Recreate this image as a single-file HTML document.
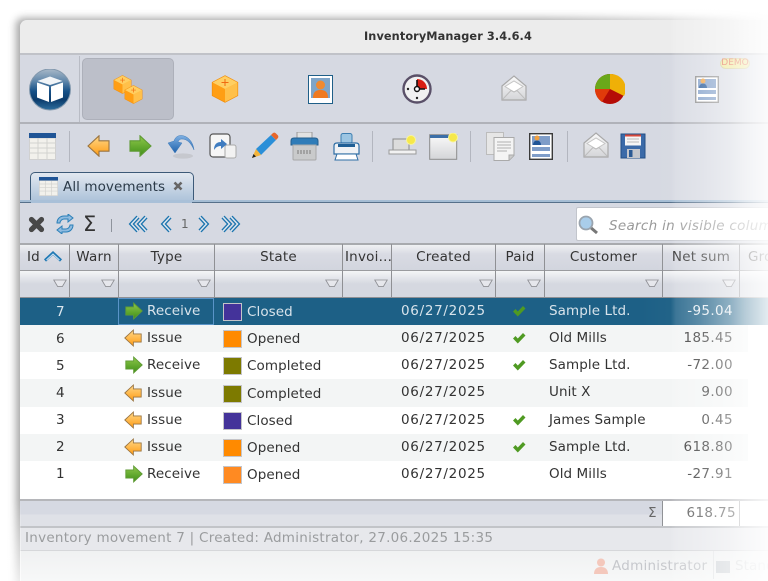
<!DOCTYPE html>
<html><head><meta charset="utf-8"><style>
html,body{margin:0;padding:0;background:#fff}
#p{position:relative;width:768px;height:581px;overflow:hidden;background:#fff;font-family:"DejaVu Sans",sans-serif;font-size:13.5px;color:#333;filter:blur(.35px)}
#p div,#p svg{position:absolute}
.t{white-space:nowrap;line-height:16px;letter-spacing:.08px;margin-top:1px}
.d{letter-spacing:.7px}
.n{letter-spacing:.38px;left:633px;width:100px;text-align:right}
.h{white-space:nowrap;line-height:16px;text-align:center;top:249px;color:#333;letter-spacing:.2px}
.vl{width:1px;background:#8f9094}
.sep{width:1px;background:#b3b6bf;top:131px;height:31px}
.sw{left:223px;width:17px;height:16px;border:1px solid #c4c4c8}
</style></head><body><div id="p">
<svg width="0" height="0" style="left:0;top:0">
<defs>
<linearGradient id="or" x1="0" y1="0" x2="0" y2="1"><stop offset="0" stop-color="#ffd98a"/><stop offset="1" stop-color="#ff9a12"/></linearGradient>
<linearGradient id="gr" x1="0" y1="0" x2="0" y2="1"><stop offset="0" stop-color="#8fc84a"/><stop offset="1" stop-color="#3f8f18"/></linearGradient>
<linearGradient id="bl" x1="0" y1="0" x2="0" y2="1"><stop offset="0" stop-color="#7fb0e2"/><stop offset="1" stop-color="#1f62ac"/></linearGradient>
<linearGradient id="lg" x1="0" y1="0" x2="0" y2="1"><stop offset="0" stop-color="#fafafa"/><stop offset="1" stop-color="#d4d5d8"/></linearGradient>
<symbol id="al" viewBox="0 0 23 22"><path d="M1 11 12 .8v5h10v10.400H12v5z" fill="url(#or)" stroke="#9a7440" stroke-width="1.100"/></symbol>
<symbol id="ar" viewBox="0 0 23 22"><path d="M22 11 11 .8v5H1v10.400h10v5z" fill="url(#gr)" stroke="#5f9a35" stroke-width="1.100"/></symbol>
<symbol id="tb" viewBox="0 0 27 27"><rect x=".5" y="5" width="26" height="21.5" fill="#f2f1ec" stroke="#d0d0d0"/><rect width="27" height="5" fill="#1f5496"/><path d="M9 5v22M18 5v22M0 10h27M0 15h27M0 20h27" stroke="#d2d2cf"/></symbol>
<symbol id="cube" viewBox="0 0 28 28"><path d="M14 1 26.500 7.500v13L14 27 1.500 20.500v-13z" fill="#ffb42e" stroke="#f28c0a" stroke-width="1.300"/><path d="M14 1 26.500 7.500 14 14 1.500 7.500z" fill="#ffcf62"/><path d="M1.500 7.500 14 14v13L1.500 20.500z" fill="#ff9e14"/><path d="M14 14 26.500 7.500v13L14 27z" fill="#ffc04a"/><path d="M14 4v7M10.500 7.500h7" stroke="#f06a10"/></symbol>
<symbol id="env" viewBox="0 0 26 26"><path d="M1 11 13 1l12 10v14H1z" fill="url(#lg)" stroke="#a9a9a9" stroke-width="1.200"/><path d="M4 11.500 13 6l9 5.500-9 5.500z" fill="#fff" stroke="#c5c5c5"/><path d="M1.500 24.500 10 15.500l3 1.500 3-1.500 8.500 9" fill="none" stroke="#bdbdbd"/></symbol>
<symbol id="con" viewBox="0 0 24 27"><rect x=".7" y=".7" width="22.600" height="25.600" fill="#fff" stroke="currentColor" stroke-width="1.400"/><rect x="3" y="3" width="18" height="9" fill="#7f9dc8"/><rect x="3" y="14" width="18" height="4" fill="#7f9dc8"/><rect x="3" y="21" width="18" height="3" fill="#7f9dc8"/><circle cx="8" cy="5" r="2.500" fill="#f0a040"/><path d="M4 12c0-3 2-4.500 4-4.500s4 1.500 4 4.500z" fill="#1f5496"/></symbol>
<symbol id="chk" viewBox="0 0 14 12"><path d="M1 6.500 3.500 4 5.800 6.500 11 1l2.500 2.500-7.700 8z" fill="#4f9a22"/></symbol>
<symbol id="fl" viewBox="0 0 18 11"><path d="M1 1h16L12 9.500H6z" fill="#e6e7ec" stroke="#8e8f94" stroke-width="1.100"/></symbol>
</defs></svg>

<!-- window -->
<div style="left:20px;top:20px;width:760px;height:575px;background:#d6d9e2;border-radius:7px 0 0 0;box-shadow:-4px -2px 8px rgba(60,60,60,.45)"></div>
<div style="left:20px;top:20px;width:748px;height:33px;background:#ececec;border-radius:7px 0 0 0"></div>
<div style="left:20px;top:53px;width:748px;height:2px;background:#c0c2c8"></div>
<div class="t" style="left:364px;top:28px;font-weight:bold;font-size:11.300px;color:#333;letter-spacing:.1px">InventoryManager 3.4.6.4</div>

<!-- main toolbar -->
<div style="left:79px;top:56px;width:1px;height:66px;background:#b9bcc5"></div>
<div style="left:20px;top:122px;width:748px;height:2px;background:#b0b2b9"></div>
<div style="left:82px;top:58px;width:90px;height:60px;background:#bcbfc9;border:1px solid #adb0ba;border-radius:5px"></div>
<svg style="left:29px;top:69px" width="42" height="42" viewBox="0 0 42 42"><defs><linearGradient id="lo" x1="0" y1="0" x2="0" y2="1"><stop offset="0" stop-color="#a8b8c8"/><stop offset=".3" stop-color="#5f86aa"/><stop offset=".55" stop-color="#154f86"/><stop offset=".75" stop-color="#0c3c6c"/><stop offset="1" stop-color="#2e6f9f"/></linearGradient></defs><circle cx="21" cy="20.500" r="20.500" fill="url(#lo)" stroke="#8298ad"/><path d="M21 7.500 33.500 12 21 16 8.500 12z" fill="#f2f5f8"/><path d="M8 13.500 20 17.500v15.500L8 28.500z" fill="#fff"/><path d="M34 13.500 22 17.500v15.500L34 28.500z" fill="#fff"/></svg>
<svg style="left:113px;top:75px" width="19" height="19"><use href="#cube" width="19" height="19"/></svg>
<svg style="left:124px;top:85px" width="19" height="19"><use href="#cube" width="19" height="19"/></svg>
<svg style="left:211px;top:75px" width="28" height="28"><use href="#cube" width="28" height="28"/></svg>
<svg style="left:308px;top:75px" width="25" height="29" viewBox="0 0 25 29"><rect x=".5" y=".5" width="24" height="28" fill="#fff" stroke="#1f5f88"/><rect x="3" y="3" width="19" height="20" fill="#7fa5c8"/><circle cx="12.500" cy="10" r="4.500" fill="#f08a30"/><path d="M5 23c0-7 4-8 7.500-8s7.500 1 7.500 8z" fill="#f07a20"/></svg>
<svg style="left:402px;top:74px" width="30" height="30" viewBox="0 0 30 30"><circle cx="15" cy="15" r="13.500" fill="#f1f1f1" stroke="#5a5068" stroke-width="2.400"/><path d="M15 15V5a10 10 0 0 1 10 10z" fill="#d81e12"/><path d="M15 6v9h8" fill="none" stroke="#111" stroke-width="1.600"/><circle cx="15" cy="15" r="2.500" fill="#fff" stroke="#111" stroke-width="1.400"/><circle cx="6" cy="15" r="1.200" fill="#222"/><circle cx="15" cy="24" r="1.200" fill="#222"/></svg>
<svg style="left:501px;top:75px" width="26" height="26"><use href="#env" width="26" height="26"/></svg>
<svg style="left:595px;top:74px" width="30" height="30" viewBox="0 0 30 30"><circle cx="15" cy="15" r="15" fill="#b50c06"/><path d="M15 15V0A15 15 0 0 1 29 22z" fill="#efb007"/><path d="M15 15H0A15 15 0 0 1 15 0z" fill="#6aa81a"/><path d="M15 15H0A15 15 0 0 0 7 28z" fill="#e03a0a"/></svg>
<svg style="left:695px;top:76px;color:#8a8a8a" width="24" height="27"><use href="#con" width="24" height="27"/></svg>
<div style="left:720px;top:58px;width:30px;height:11px;background:#eee68c;border:1px solid #cfc98e;border-radius:6px;box-sizing:border-box;color:#e06040;font-size:9px;line-height:9px;text-align:center">DEMO</div>

<!-- second toolbar -->
<svg style="left:29px;top:133px" width="27" height="27"><use href="#tb" width="27" height="27"/></svg>
<div class="sep" style="left:69px"></div>
<svg style="left:87px;top:135px" width="23" height="22"><use href="#al" width="23" height="22"/></svg>
<svg style="left:129px;top:135px" width="23" height="22"><use href="#ar" width="23" height="22"/></svg>
<svg style="left:167px;top:134px" width="28" height="26" viewBox="0 0 28 26"><ellipse cx="16" cy="22" rx="10" ry="2.600" fill="#c6c8ce"/><path d="M27 16C26 7 20 1.500 14 1.500 10 1.500 8 4 7 7L1 9l7 10 7-10-4-1c1-2 2-3 4-3 5 0 9 4 12 11z" fill="url(#bl)" stroke="#3f7cba" stroke-width=".5"/></svg>
<svg style="left:209px;top:133px" width="28" height="27" viewBox="0 0 28 27"><rect x="1" y="1" width="20" height="23" rx="3" fill="#f6f6f6" stroke="#555" stroke-width="1.200"/><rect x="16" y="12" width="11" height="13" rx="2" fill="#f2f2f2" stroke="#aaa"/><path d="M5 17c0-6 3-8 7-8V6l6 5-6 5v-3c-3 0-5 1-7 4z" fill="#3f7cc0"/></svg>
<svg style="left:249px;top:132px" width="30" height="28" viewBox="0 0 30 28"><path d="M7 17 22 3l5 5L12 23z" fill="#2b8fd8"/><path d="M22 3l2-2c1-.5 2-.5 3 .5l2 2c.5 1 .5 2-.5 3L27 8z" fill="#e8662a"/><path d="M7 17l5 6-9 3z" fill="#f4b43a"/><path d="M3 26l1.500-4 2.500 2.500z" fill="#222"/></svg>
<svg style="left:290px;top:132px" width="29" height="29" viewBox="0 0 29 29"><rect x="7" y="0" width="15" height="8" fill="#e2e2e2" stroke="#999"/><path d="M1 9c0-2 1-3 3-3h21c2 0 3 1 3 3v4H1z" fill="#2f7cb8" stroke="#24608f"/><path d="M3 13h23v14c0 1-1 1-1 1H4c-1 0-1-1-1-1z" fill="#c9cacb" stroke="#a8a8a8"/><path d="M8 18v4M11 18v4M14 18v4M17 18v4M20 18v4" stroke="#888" stroke-width="1.200"/></svg>
<svg style="left:333px;top:133px" width="27" height="28" viewBox="0 0 27 28"><rect x="8" y="0.500" width="11" height="10" rx="2" fill="#9cc5e2" stroke="#3d7eb0"/><path d="M1 13c0-2 1-3 3-3h19c2 0 3 1 3 3v8H1z" fill="#f0f2f5" stroke="#2e6ea5" stroke-width="1.200"/><rect x="5" y="11" width="17" height="3" fill="#1f5f96"/><path d="M4 21h19l2 6H2z" fill="#fff" stroke="#2e6ea5"/></svg>
<div class="sep" style="left:372px"></div>
<svg style="left:388px;top:134px" width="29" height="22" viewBox="0 0 29 22"><path d="M5 5h16v11H5z" fill="#dcdcdc" stroke="#8a8a8a"/><path d="M1 16h27v4H1z" fill="#f2f2f2" stroke="#9a9a9a"/><circle cx="23" cy="6" r="4.500" fill="#f6e84a" stroke="#f8f49a"/></svg>
<svg style="left:429px;top:133px" width="30" height="27" viewBox="0 0 30 27"><rect x=".7" y="1.700" width="27" height="24.600" fill="url(#lg)" stroke="#8c8c8c"/><rect x="1" y="2" width="26" height="3" fill="#3c6fa8"/><circle cx="24" cy="4.500" r="4.500" fill="#f6e84a" stroke="#f8f49a"/></svg>
<div class="sep" style="left:470px"></div>
<svg style="left:486px;top:132px" width="29" height="29" viewBox="0 0 29 29"><rect x=".5" y=".5" width="17" height="22" fill="#e6e6e6" stroke="#bcbcbc"/><path d="M8 5.500h20v18l-5 5H8z" fill="#f4f4f4" stroke="#aaa"/><path d="M11 10h14M11 13h14M11 16h14M11 19h10" stroke="#b0b0b0"/><path d="M23 28v-5h5" fill="#ccc" stroke="#aaa"/></svg>
<svg style="left:529px;top:133px;color:#3a3a3a" width="24" height="27"><use href="#con" width="24" height="27"/></svg>
<div class="sep" style="left:567px"></div>
<svg style="left:583px;top:132px" width="26" height="26"><use href="#env" width="26" height="26"/></svg>
<svg style="left:620px;top:133px" width="26" height="26" viewBox="0 0 26 26"><path d="M1 1h24v24H1z" fill="#3b6aa8" stroke="#234f86"/><rect x="5" y="1.500" width="16" height="11" fill="#f6f6f6"/><rect x="5" y="1.500" width="16" height="2" fill="#d8483a"/><path d="M7 6h12M7 9h12" stroke="#bbb"/><rect x="7" y="16" width="13" height="9" fill="#c4c6cc"/><rect x="9" y="17" width="3.500" height="7" fill="#2b5a94"/></svg>

<!-- tab -->
<div style="left:30px;top:172px;width:162px;height:30px;border:1px solid #3d5a78;border-bottom:none;border-radius:5px 5px 0 0;background:linear-gradient(180deg,#e2e8f0,#a9c0d8)"></div>
<svg style="left:39px;top:177px" width="19" height="19"><use href="#tb" width="19" height="19"/></svg>
<div class="t" style="left:63px;top:178px;color:#2b3a48">All movements</div>
<svg style="left:173px;top:181px" width="10" height="10" viewBox="0 0 10 10"><path d="M1.500 1.500l7 7M8.500 1.500l-7 7" stroke="#666" stroke-width="2.600"/></svg>
<div style="left:20px;top:200px;width:748px;height:3px;background:#a5bdd4;border-bottom:1px solid #56708a;box-sizing:border-box"></div>
<div style="left:31px;top:200px;width:161px;height:3px;background:#a9c0d8"></div>

<!-- filter toolbar -->
<svg style="left:28px;top:216px" width="17" height="17" viewBox="0 0 17 17"><path d="M3.500 3.500l10 10M13.500 3.500l-10 10" stroke="#484848" stroke-width="5.200" stroke-linecap="round"/></svg>
<svg style="left:55px;top:214px" width="20" height="20" viewBox="0 0 20 20"><path d="M2 9c0-4 3-7 7-7h4V0l5 4-5 4V5H9C7 5 5 7 5 9zM18 11c0 4-3 7-7 7H7v2l-5-4 5-4v3h4c2 0 4-2 4-4z" fill="#8fbbdf" stroke="#2a7fb8"/></svg>
<div class="t" style="left:83px;top:212px;font-size:21px;line-height:22px;color:#333;letter-spacing:0">Σ</div>
<div style="left:111px;top:219px;width:1px;height:13px;background:#8e939c"></div>
<svg style="left:127px;top:215px" width="22" height="18" viewBox="0 0 22 18"><g fill="none" stroke-linejoin="miter"><path d="M19 2 12.500 9l6.500 7" stroke="#1b74ae" stroke-width="4.200"/><path d="M19 2 12.500 9l6.500 7" stroke="#dfe6ee" stroke-width="1.500"/><path d="M11 2 4.500 9l6.500 7" stroke="#1b74ae" stroke-width="4.200"/><path d="M11 2 4.500 9l6.500 7" stroke="#dfe6ee" stroke-width="1.500"/></g></svg>
<svg style="left:160px;top:215px" width="13" height="18" viewBox="0 0 13 18"><path d="M10 2 3.500 9l6.500 7" fill="none" stroke="#1b74ae" stroke-width="4.200"/><path d="M10 2 3.500 9l6.500 7" fill="none" stroke="#dfe6ee" stroke-width="1.500"/></svg>
<div class="t" style="left:181px;top:215px;font-size:12px;color:#666;letter-spacing:0">1</div>
<svg style="left:197px;top:215px" width="13" height="18" viewBox="0 0 13 18"><path d="M3 2l6.500 7L3 16" fill="none" stroke="#1b74ae" stroke-width="4.200"/><path d="M3 2l6.500 7L3 16" fill="none" stroke="#dfe6ee" stroke-width="1.500"/></svg>
<svg style="left:220px;top:215px" width="22" height="18" viewBox="0 0 22 18"><g fill="none"><path d="M3 2l6.500 7L3 16" stroke="#1b74ae" stroke-width="4.200"/><path d="M3 2l6.500 7L3 16" stroke="#dfe6ee" stroke-width="1.500"/><path d="M11 2l6.500 7L11 16" stroke="#1b74ae" stroke-width="4.200"/><path d="M11 2l6.500 7L11 16" stroke="#dfe6ee" stroke-width="1.500"/></g></svg>
<div style="left:576px;top:207px;width:192px;height:34px;background:#fff;border:1px solid #c2c5cc;border-right:none;box-sizing:border-box;border-radius:2px 0 0 2px"></div>
<svg style="left:578px;top:215px" width="21" height="20" viewBox="0 0 21 20"><path d="M12 12l7 6" stroke="#777" stroke-width="3"/><circle cx="8" cy="8" r="6.500" fill="#a9cdea" stroke="#9aa4ae" stroke-width="1.800"/></svg>
<div class="t" style="left:609px;top:217px;font-style:italic;color:#999;letter-spacing:.3px">Search in visible columns</div>

<!-- table header -->
<div style="left:20px;top:244px;width:748px;height:54px;background:linear-gradient(180deg,#f2f3f5 0,#d9dbe3 10px,#d2d5de 26px,#f4f5f7 27px,#d5d8e0 40px,#d5d8e0 54px)"></div>
<div style="left:20px;top:243px;width:748px;height:2px;background:#a8aaae"></div>
<div style="left:20px;top:270px;width:748px;height:1px;background:#9a9b9f"></div>
<div style="left:20px;top:297px;width:748px;height:1px;background:#8f9094"></div>
<div class="vl" style="left:69px;top:244px;height:54px"></div>
<div class="vl" style="left:118px;top:244px;height:54px"></div>
<div class="vl" style="left:214px;top:244px;height:54px"></div>
<div class="vl" style="left:342px;top:244px;height:54px"></div>
<div class="vl" style="left:391px;top:244px;height:54px"></div>
<div class="vl" style="left:495px;top:244px;height:54px"></div>
<div class="vl" style="left:544px;top:244px;height:54px"></div>
<div class="vl" style="left:662px;top:244px;height:54px"></div>
<div class="vl" style="left:739px;top:244px;height:54px"></div>
<div class="h" style="left:27px;width:14px;text-align:left">Id</div>
<svg style="left:43px;top:250px" width="20" height="13" viewBox="0 0 20 13"><path d="M2 10.500 10 3l8 7.500" fill="none" stroke="#1e78b4" stroke-width="3"/><path d="M3.500 10 10 4l6.500 6" fill="none" stroke="#d4e6f4" stroke-width="1"/></svg>
<div class="h" style="left:70px;width:48px">Warn</div>
<div class="h" style="left:119px;width:95px">Type</div>
<div class="h" style="left:215px;width:127px">State</div>
<div class="h" style="left:345px;width:46px;text-align:left">Invoi…</div>
<div class="h" style="left:392px;width:103px">Created</div>
<div class="h" style="left:496px;width:48px">Paid</div>
<div class="h" style="left:545px;width:117px">Customer</div>
<div class="h" style="left:663px;width:76px">Net sum</div>
<div class="h" style="left:748px;text-align:left">Gross</div>
<svg style="left:53px;top:279px" width="14" height="9"><use href="#fl" width="14" height="9"/></svg>
<svg style="left:101px;top:279px" width="14" height="9"><use href="#fl" width="14" height="9"/></svg>
<svg style="left:197px;top:279px" width="14" height="9"><use href="#fl" width="14" height="9"/></svg>
<svg style="left:325px;top:279px" width="14" height="9"><use href="#fl" width="14" height="9"/></svg>
<svg style="left:374px;top:279px" width="14" height="9"><use href="#fl" width="14" height="9"/></svg>
<svg style="left:479px;top:279px" width="14" height="9"><use href="#fl" width="14" height="9"/></svg>
<svg style="left:527px;top:279px" width="14" height="9"><use href="#fl" width="14" height="9"/></svg>
<svg style="left:645px;top:279px" width="14" height="9"><use href="#fl" width="14" height="9"/></svg>
<svg style="left:722px;top:279px" width="14" height="9"><use href="#fl" width="14" height="9"/></svg>

<!-- table body -->
<div style="left:20px;top:298px;width:748px;height:203px;background:#fff"></div>
<div style="left:20px;top:298px;width:748px;height:27px;background:#1d6086"></div>
<div style="left:20px;top:325px;width:728px;height:27px;background:#f3f5f5"></div>
<div style="left:20px;top:379px;width:728px;height:28px;background:#f3f5f5"></div>
<div style="left:20px;top:434px;width:728px;height:27px;background:#f3f5f5"></div>
<div style="left:118px;top:298px;width:96px;height:27px;border:1px solid #5a94c8;box-sizing:border-box"></div>

<!-- row 7 -->
<div class="t" style="left:56px;top:303px;color:#dbe6ee">7</div>
<svg style="left:125px;top:302px" width="18" height="18"><use href="#ar" width="18" height="18"/></svg>
<div class="t" style="left:147px;top:302px;color:#d8e3eb">Receive</div>
<div class="sw" style="top:303px;background:#44339a"></div>
<div class="t" style="left:247px;top:303px;color:#d8e3eb">Closed</div>
<div class="t d" style="left:401px;top:302px;color:#d8e3eb">06/27/2025</div>
<svg style="left:512px;top:305px" width="14" height="12"><use href="#chk" width="14" height="12"/></svg>
<div class="t" style="left:549px;top:302px;color:#d8e3eb">Sample Ltd.</div>
<div class="t n" style="top:302px;color:#e4ecf2">-95.04</div>
<!-- row 6 -->
<div class="t" style="left:56px;top:330px">6</div>
<svg style="left:124px;top:329px" width="18" height="18"><use href="#al" width="18" height="18"/></svg>
<div class="t" style="left:147px;top:329px">Issue</div>
<div class="sw" style="top:330px;background:#ff8a00"></div>
<div class="t" style="left:247px;top:330px">Opened</div>
<div class="t d" style="left:401px;top:329px">06/27/2025</div>
<svg style="left:512px;top:332px" width="14" height="12"><use href="#chk" width="14" height="12"/></svg>
<div class="t" style="left:549px;top:329px">Old Mills</div>
<div class="t n" style="top:329px">185.45</div>
<!-- row 5 -->
<div class="t" style="left:56px;top:357px">5</div>
<svg style="left:125px;top:356px" width="18" height="18"><use href="#ar" width="18" height="18"/></svg>
<div class="t" style="left:147px;top:356px">Receive</div>
<div class="sw" style="top:357px;background:#7d7a00"></div>
<div class="t" style="left:247px;top:357px">Completed</div>
<div class="t d" style="left:401px;top:356px">06/27/2025</div>
<svg style="left:512px;top:359px" width="14" height="12"><use href="#chk" width="14" height="12"/></svg>
<div class="t" style="left:549px;top:356px">Sample Ltd.</div>
<div class="t n" style="top:356px">-72.00</div>
<!-- row 4 -->
<div class="t" style="left:56px;top:384px">4</div>
<svg style="left:124px;top:384px" width="18" height="18"><use href="#al" width="18" height="18"/></svg>
<div class="t" style="left:147px;top:384px">Issue</div>
<div class="sw" style="top:385px;background:#7d7a00"></div>
<div class="t" style="left:247px;top:385px">Completed</div>
<div class="t d" style="left:401px;top:383px">06/27/2025</div>
<div class="t" style="left:549px;top:383px">Unit X</div>
<div class="t n" style="top:383px">9.00</div>
<!-- row 3 -->
<div class="t" style="left:56px;top:411px">3</div>
<svg style="left:124px;top:411px" width="18" height="18"><use href="#al" width="18" height="18"/></svg>
<div class="t" style="left:147px;top:411px">Issue</div>
<div class="sw" style="top:412px;background:#44339a"></div>
<div class="t" style="left:247px;top:412px">Closed</div>
<div class="t d" style="left:401px;top:411px">06/27/2025</div>
<svg style="left:512px;top:414px" width="14" height="12"><use href="#chk" width="14" height="12"/></svg>
<div class="t" style="left:549px;top:411px">James Sample</div>
<div class="t n" style="top:411px">0.45</div>
<!-- row 2 -->
<div class="t" style="left:56px;top:438px">2</div>
<svg style="left:124px;top:438px" width="18" height="18"><use href="#al" width="18" height="18"/></svg>
<div class="t" style="left:147px;top:438px">Issue</div>
<div class="sw" style="top:439px;background:#ff8a00"></div>
<div class="t" style="left:247px;top:439px">Opened</div>
<div class="t d" style="left:401px;top:438px">06/27/2025</div>
<svg style="left:512px;top:441px" width="14" height="12"><use href="#chk" width="14" height="12"/></svg>
<div class="t" style="left:549px;top:438px">Sample Ltd.</div>
<div class="t n" style="top:438px">618.80</div>
<!-- row 1 -->
<div class="t" style="left:56px;top:465px">1</div>
<svg style="left:125px;top:465px" width="18" height="18"><use href="#ar" width="18" height="18"/></svg>
<div class="t" style="left:147px;top:465px">Receive</div>
<div class="sw" style="top:466px;background:#ff8a22"></div>
<div class="t" style="left:247px;top:466px">Opened</div>
<div class="t d" style="left:401px;top:465px">06/27/2025</div>
<div class="t" style="left:549px;top:465px">Old Mills</div>
<div class="t n" style="top:465px">-27.91</div>

<!-- summary -->
<div style="left:20px;top:499px;width:748px;height:2px;background:#b5b6ba"></div>
<div style="left:20px;top:501px;width:748px;height:25px;background:linear-gradient(180deg,#d6d9e2,#d6d9e2 13px,#dfe1e7 14px,#dfe1e7)"></div>
<div class="t" style="left:648px;top:504px;color:#666;letter-spacing:0">Σ</div>
<div style="left:662px;top:501px;width:106px;height:25px;background:#fff;border-left:1px solid #8f9094"></div>
<div style="left:739px;top:501px;width:1px;height:25px;background:#a8a9ac"></div>
<div class="t n" style="left:636px;top:504px;color:#555">618.75</div>
<div style="left:20px;top:526px;width:748px;height:2px;background:#c2c4c8"></div>
<div style="left:20px;top:528px;width:748px;height:22px;background:#e7e8ec"></div>
<div class="t" style="left:25px;top:529px;color:#9a9c9e;letter-spacing:.27px">Inventory movement 7 | Created: Administrator, 27.06.2025 15:35</div>
<div style="left:20px;top:550px;width:748px;height:1px;background:#d6d7da"></div>
<div style="left:20px;top:551px;width:748px;height:30px;background:linear-gradient(180deg,#f0f1f2,#f7f8f8)"></div>
<svg style="left:594px;top:558px" width="14" height="16" viewBox="0 0 14 16"><circle cx="7" cy="4.500" r="4" fill="#f4c8bc"/><path d="M0 16c0-5 3-7 7-7s7 2 7 7z" fill="#f4c8bc"/></svg>
<div class="t" style="left:612px;top:557px;color:#c6c8cc;letter-spacing:.25px">Administrator</div>
<div style="left:713px;top:551px;width:1px;height:28px;background:#e4e5e7"></div>
<svg style="left:716px;top:561px" width="14" height="12"><rect width="14" height="12" fill="#d2d6da"/></svg>
<div class="t" style="left:735px;top:557px;color:#d8dadc">Standard</div>

<!-- fade overlays -->
<div style="left:0;top:500px;width:21px;height:81px;background:linear-gradient(180deg,rgba(255,255,255,0),rgba(255,255,255,.75))"></div>
<div style="left:640px;top:0;width:128px;height:581px;background:linear-gradient(90deg,rgba(255,255,255,0) 0,rgba(255,255,255,.02) 24%,rgba(255,255,255,.14) 28%,rgba(255,255,255,.28) 47%,rgba(255,255,255,.5) 70%,rgba(255,255,255,.68) 82%,rgba(255,255,255,.88) 100%)"></div>
<div style="left:0;top:0;width:768px;height:20px;background:linear-gradient(270deg,rgba(255,255,255,.85),rgba(255,255,255,0) 30%)"></div>
</div></body></html>
